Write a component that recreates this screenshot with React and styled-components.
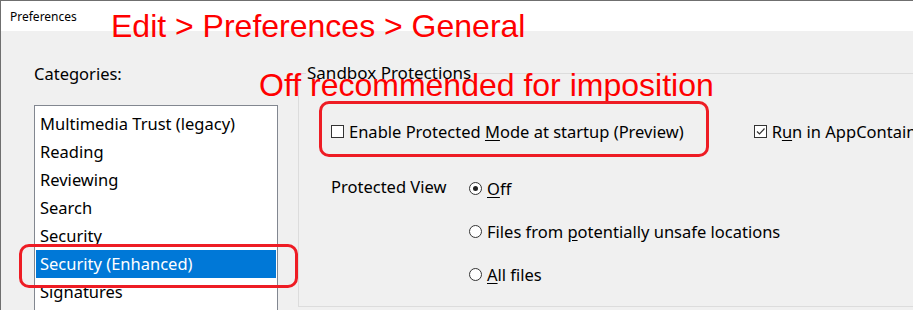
import React from "react";
import styled, { createGlobalStyle } from "styled-components";

const Global = createGlobalStyle`
  html, body { margin: 0; padding: 0; background: #f0f0f0; }
  body { font-family: "Noto Sans", "Open Sans", sans-serif; color: #000; }
`;

const Window = styled.div`
  position: relative;
  width: 913px;
  height: 310px;
  overflow: hidden;
  box-sizing: border-box;
  border-top: 1px solid #6f6f6f;
  border-left: 1px solid #6f6f6f;
  background: #f0f0f0;
`;

const TitleBar = styled.div`
  height: 30px;
  background: #fff;
  display: flex;
  align-items: center;
  padding-left: 9px;
  font-size: 12px;
`;

const Content = styled.div`
  display: flex;
  align-items: flex-start;
`;

const LeftPane = styled.div`
  width: 244px;
  margin-left: 33px;
  display: flex;
  flex-direction: column;
`;

const Label = styled.div`
  font-size: 16.5px;
  line-height: 22px;
  margin-top: ${(p) => p.$top || 0}px;
`;

const ListBox = styled.div`
  margin-top: 20px;
  background: #fff;
  border: 1px solid #828790;
  padding: 4px 1px 0;
  height: 220px;
`;

const Item = styled.div`
  height: 28px;
  line-height: 28px;
  padding-left: 4px;
  font-size: 16.5px;
  background: ${(p) => (p.$selected ? "#0078d7" : "transparent")};
  color: ${(p) => (p.$selected ? "#fff" : "#000")};
  white-space: nowrap;
`;

const GroupBox = styled.fieldset`
  margin: 33px -40px 0 20px;
  padding: 0 0 0 32px;
  flex: 1;
  height: 241px;
  border: 1px solid #dcdcdc;
  min-width: 0;
`;

const Legend = styled.legend`
  font-size: 17px;
  padding: 0 1px;
  margin-left: -25px;
  line-height: 18px;
`;

const CheckRow = styled.div`
  display: flex;
  align-items: center;
  margin-top: 37px;
  height: 24px;
  white-space: nowrap;
`;

const Option = styled.label`
  display: flex;
  align-items: center;
  gap: 5px;
  font-size: 16.5px;
  margin-right: ${(p) => p.$mr || 0}px;
`;

const Box = styled.span`
  width: 11px;
  height: 11px;
  border: 1px solid #333;
  background: #fff;
  display: inline-flex;
  align-items: center;
  justify-content: center;
`;

const Circle = styled.span`
  width: 11px;
  height: 11px;
  border: 1px solid #333;
  border-radius: 50%;
  background: #fff;
  display: inline-flex;
  align-items: center;
  justify-content: center;
  &::after {
    content: "";
    display: ${(p) => (p.$on ? "block" : "none")};
    width: 5px;
    height: 5px;
    border-radius: 50%;
    background: #222;
  }
`;

const U = styled.span`
  text-decoration: underline;
  text-underline-offset: 2px;
`;

const ViewRow = styled.div`
  display: grid;
  grid-template-columns: 138px auto;
  margin-top: 33px;
`;

const RadioCol = styled.div`
  display: flex;
  flex-direction: column;
  gap: 19px;
`;

const RadioLine = styled(Option)`
  height: 24px;
`;

const Note = styled.div`
  position: absolute;
  left: ${(p) => p.$x}px;
  top: ${(p) => p.$y}px;
  font-family: "Liberation Sans", Arial, sans-serif;
  font-size: ${(p) => p.$size}px;
  line-height: 1;
  color: #ff0000;
  white-space: nowrap;
  pointer-events: none;
`;

const Ring = styled.div`
  position: absolute;
  left: ${(p) => p.$x}px;
  top: ${(p) => p.$y}px;
  width: ${(p) => p.$w}px;
  height: ${(p) => p.$h}px;
  box-sizing: border-box;
  border: 3px solid #ee1c24;
  border-radius: 10px;
  pointer-events: none;
`;

const categories = [
  "Multimedia Trust (legacy)",
  "Reading",
  "Reviewing",
  "Search",
  "Security",
  "Security (Enhanced)",
  "Signatures",
];

export default function App() {
  return (
    <Window>
      <Global />
      <TitleBar>Preferences</TitleBar>
      <Content>
        <LeftPane>
          <Label $top={32}>Categories:</Label>
          <ListBox>
            {categories.map((c) => (
              <Item key={c} $selected={c === "Security (Enhanced)"}>
                {c}
              </Item>
            ))}
          </ListBox>
        </LeftPane>
        <GroupBox>
          <Legend>Sandbox Protections</Legend>
          <CheckRow>
            <Option $mr={70}>
              <Box />
              <span>
                Enable Protected <U>M</U>ode at startup (Preview)
              </span>
            </Option>
            <Option>
              <Box>
                <svg width="11" height="11" viewBox="0 0 11 11">
                  <path d="M2 5.5 L4.5 8 L9.5 2.5" fill="none" stroke="#333" strokeWidth="1.2" />
                </svg>
              </Box>
              <span>
                R<U>u</U>n in AppContainer
              </span>
            </Option>
          </CheckRow>
          <ViewRow>
            <Label>Protected View</Label>
            <RadioCol>
              <RadioLine>
                <Circle $on />
                <span>
                  <U>O</U>ff
                </span>
              </RadioLine>
              <RadioLine>
                <Circle />
                <span>
                  Files from <U>p</U>otentially unsafe locations
                </span>
              </RadioLine>
              <RadioLine>
                <Circle />
                <span>
                  <U>A</U>ll files
                </span>
              </RadioLine>
            </RadioCol>
          </ViewRow>
        </GroupBox>
      </Content>
      <Note $x={110} $y={9} $size={32}>Edit &gt; Preferences &gt; General</Note>
      <Note $x={258} $y={68} $size={32}>Off recommended for imposition</Note>
      <Ring $x={318} $y={100} $w={390} $h={56} />
      <Ring $x={18} $y={243} $w={279} $h={44} />
    </Window>
  );
}
